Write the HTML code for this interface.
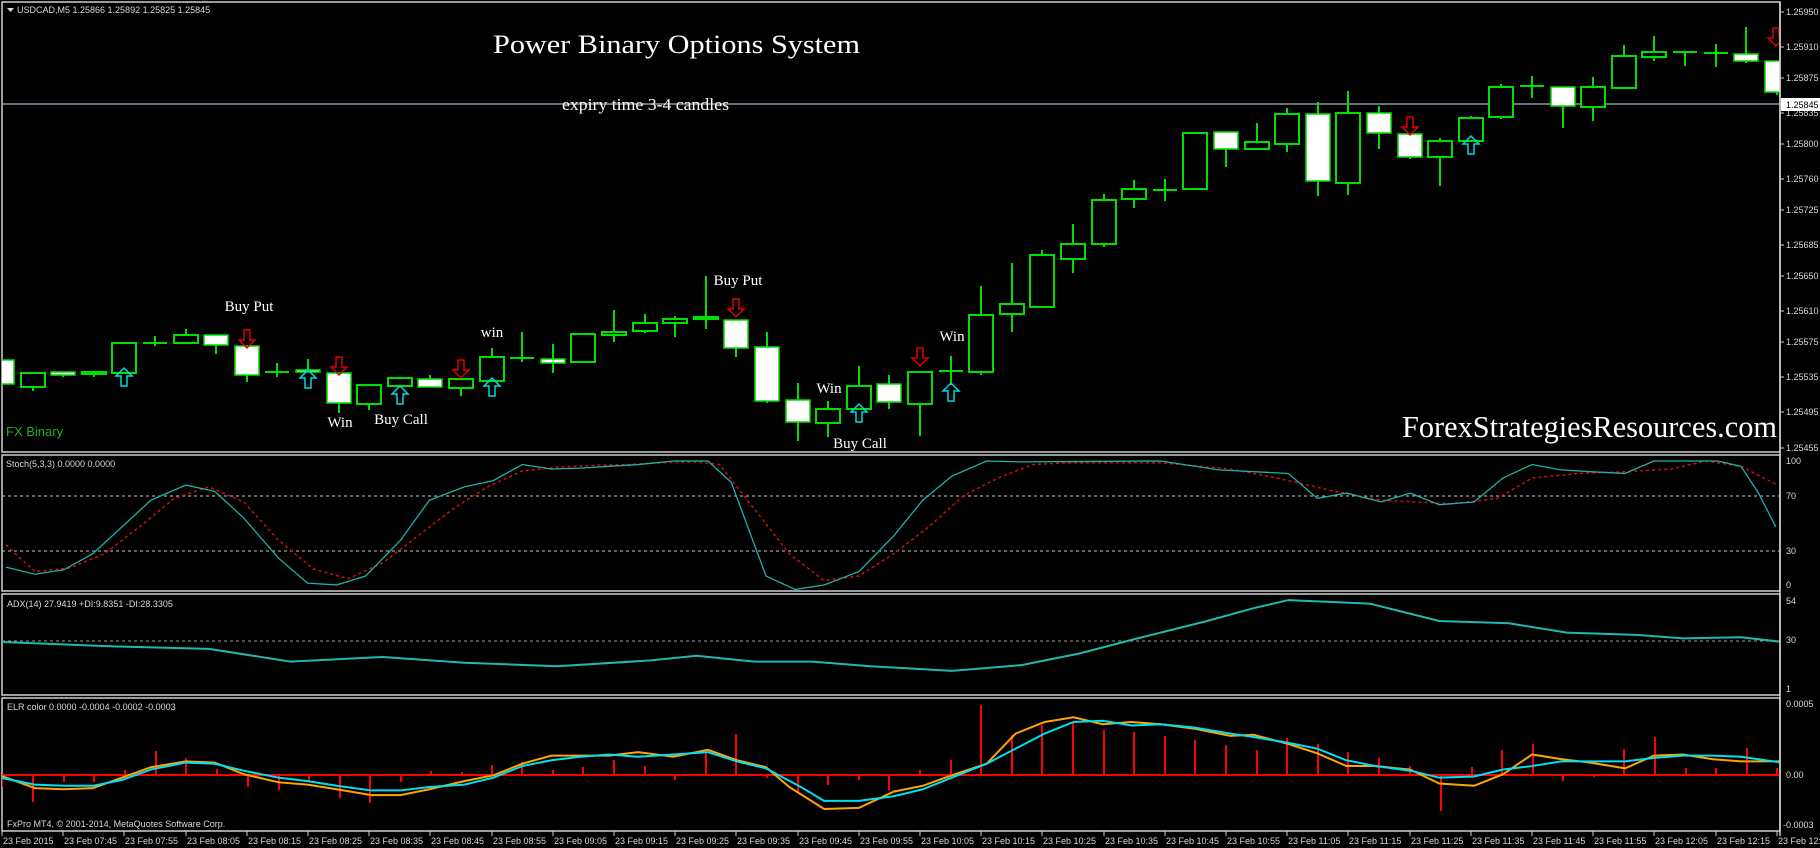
<!DOCTYPE html>
<html><head><meta charset="utf-8"><style>
html,body{margin:0;padding:0;background:#000;width:1820px;height:848px;overflow:hidden}
svg{display:block}
.ax{font-family:"Liberation Sans",sans-serif;font-size:9px;fill:#d8d8d8}
.sr{font-family:"Liberation Serif",serif;fill:#fff}
</style></head><body>
<svg width="1820" height="848" viewBox="0 0 1820 848" xmlns="http://www.w3.org/2000/svg">
<defs><clipPath id="cm"><rect x="2" y="2" width="1778" height="450"/></clipPath>
<clipPath id="cp"><rect x="2" y="455" width="1778" height="376"/></clipPath></defs>
<rect width="1820" height="848" fill="#000"/>
<g fill="none" stroke="#d0d0d0" stroke-width="1.5">
<rect x="2" y="2" width="1778" height="450"/>
<rect x="2" y="455" width="1778" height="136"/>
<rect x="2" y="594" width="1778" height="101"/>
<rect x="2" y="698" width="1778" height="133"/>
</g>
<line x1="2" y1="104" x2="1780" y2="104" stroke="#8a98a8" stroke-width="1.5"/>
<g clip-path="url(#cm)">
<g stroke="#00e000" stroke-width="2">
<line x1="2" y1="360" x2="2" y2="384"/><line x1="33" y1="373" x2="33" y2="391"/><line x1="63" y1="372" x2="63" y2="377"/><line x1="94" y1="372" x2="94" y2="377"/><line x1="124" y1="342" x2="124" y2="373"/><line x1="155" y1="336" x2="155" y2="346"/><line x1="186" y1="329" x2="186" y2="343"/><line x1="216" y1="335" x2="216" y2="354"/><line x1="247" y1="346" x2="247" y2="382"/><line x1="277" y1="363" x2="277" y2="377"/><line x1="308" y1="359" x2="308" y2="372"/><line x1="339" y1="373" x2="339" y2="413"/><line x1="369" y1="384" x2="369" y2="410"/><line x1="400" y1="378" x2="400" y2="386"/><line x1="430" y1="375" x2="430" y2="387"/><line x1="461" y1="379" x2="461" y2="396"/><line x1="492" y1="348" x2="492" y2="381"/><line x1="522" y1="332" x2="522" y2="362"/><line x1="553" y1="344" x2="553" y2="373"/><line x1="583" y1="334" x2="583" y2="362"/><line x1="614" y1="310" x2="614" y2="342"/><line x1="645" y1="314" x2="645" y2="333"/><line x1="675" y1="316" x2="675" y2="337"/><line x1="706" y1="276" x2="706" y2="329"/><line x1="736" y1="320" x2="736" y2="357"/><line x1="767" y1="332" x2="767" y2="403"/><line x1="798" y1="383" x2="798" y2="441"/><line x1="828" y1="401" x2="828" y2="437"/><line x1="859" y1="366" x2="859" y2="409"/><line x1="889" y1="375" x2="889" y2="409"/><line x1="920" y1="372" x2="920" y2="436"/><line x1="951" y1="356" x2="951" y2="385"/><line x1="981" y1="286" x2="981" y2="375"/><line x1="1012" y1="263" x2="1012" y2="332"/><line x1="1042" y1="250" x2="1042" y2="307"/><line x1="1073" y1="224" x2="1073" y2="273"/><line x1="1104" y1="194" x2="1104" y2="247"/><line x1="1134" y1="180" x2="1134" y2="208"/><line x1="1165" y1="179" x2="1165" y2="201"/><line x1="1195" y1="132" x2="1195" y2="190"/><line x1="1226" y1="132" x2="1226" y2="167"/><line x1="1257" y1="123" x2="1257" y2="150"/><line x1="1287" y1="108" x2="1287" y2="152"/><line x1="1318" y1="102" x2="1318" y2="196"/><line x1="1348" y1="91" x2="1348" y2="195"/><line x1="1379" y1="106" x2="1379" y2="149"/><line x1="1410" y1="134" x2="1410" y2="159"/><line x1="1440" y1="138" x2="1440" y2="186"/><line x1="1471" y1="116" x2="1471" y2="141"/><line x1="1501" y1="84" x2="1501" y2="119"/><line x1="1532" y1="76" x2="1532" y2="98"/><line x1="1563" y1="87" x2="1563" y2="128"/><line x1="1593" y1="77" x2="1593" y2="121"/><line x1="1624" y1="45" x2="1624" y2="88"/><line x1="1654" y1="36" x2="1654" y2="61"/><line x1="1685" y1="52" x2="1685" y2="66"/><line x1="1716" y1="44" x2="1716" y2="67"/><line x1="1746" y1="27" x2="1746" y2="63"/><line x1="1777" y1="61" x2="1777" y2="95"/>
<line x1="143" y1="343" x2="167" y2="343"/><line x1="265" y1="372" x2="289" y2="372"/><line x1="510" y1="358" x2="534" y2="358"/><line x1="939" y1="371" x2="963" y2="371"/><line x1="1153" y1="190" x2="1177" y2="190"/><line x1="1520" y1="86" x2="1544" y2="86"/><line x1="1673" y1="52" x2="1697" y2="52"/><line x1="1704" y1="53" x2="1728" y2="53"/>
</g>
<g fill="#000" stroke="#00e000" stroke-width="2">
<rect x="21" y="373" width="24" height="14"/><rect x="82" y="372" width="24" height="2"/><rect x="112" y="343" width="24" height="30"/><rect x="174" y="335" width="24" height="8"/><rect x="357" y="385" width="24" height="19"/><rect x="388" y="378" width="24" height="8"/><rect x="449" y="379" width="24" height="9"/><rect x="480" y="357" width="24" height="24"/><rect x="571" y="334" width="24" height="28"/><rect x="602" y="332" width="24" height="3"/><rect x="633" y="323" width="24" height="8"/><rect x="663" y="319" width="24" height="4"/><rect x="694" y="317" width="24" height="2"/><rect x="816" y="409" width="24" height="14"/><rect x="847" y="386" width="24" height="23"/><rect x="908" y="372" width="24" height="32"/><rect x="969" y="315" width="24" height="57"/><rect x="1000" y="304" width="24" height="10"/><rect x="1030" y="255" width="24" height="52"/><rect x="1061" y="244" width="24" height="15"/><rect x="1092" y="200" width="24" height="44"/><rect x="1122" y="189" width="24" height="10"/><rect x="1183" y="133" width="24" height="56"/><rect x="1245" y="142" width="24" height="7"/><rect x="1275" y="114" width="24" height="30"/><rect x="1336" y="113" width="24" height="70"/><rect x="1428" y="141" width="24" height="16"/><rect x="1459" y="118" width="24" height="23"/><rect x="1489" y="87" width="24" height="30"/><rect x="1581" y="87" width="24" height="20"/><rect x="1612" y="56" width="24" height="32"/><rect x="1642" y="52" width="24" height="5"/>
</g>
<g fill="#fff" stroke="#00e000" stroke-width="1.5">
<rect x="-10" y="360" width="24" height="24"/><rect x="51" y="372" width="24" height="3"/><rect x="204" y="335" width="24" height="10"/><rect x="235" y="346" width="24" height="29"/><rect x="296" y="370" width="24" height="2"/><rect x="327" y="373" width="24" height="30"/><rect x="418" y="379" width="24" height="8"/><rect x="541" y="359" width="24" height="4"/><rect x="724" y="320" width="24" height="28"/><rect x="755" y="347" width="24" height="54"/><rect x="786" y="400" width="24" height="22"/><rect x="877" y="384" width="24" height="18"/><rect x="1214" y="132" width="24" height="17"/><rect x="1306" y="114" width="24" height="67"/><rect x="1367" y="113" width="24" height="20"/><rect x="1398" y="134" width="24" height="23"/><rect x="1551" y="87" width="24" height="19"/><rect x="1734" y="54" width="24" height="7"/><rect x="1765" y="61" width="24" height="31"/>
</g>
<g fill="none" stroke="#e00000" stroke-width="1.5">
<path d="M244,330h6v10h5l-8,8l-8,-8h5z"/><path d="M336,357h6v10h5l-8,8l-8,-8h5z"/><path d="M458,360h6v10h5l-8,8l-8,-8h5z"/><path d="M733,299h6v10h5l-8,8l-8,-8h5z"/><path d="M917,348h6v10h5l-8,8l-8,-8h5z"/><path d="M1407,117h6v10h5l-8,8l-8,-8h5z"/><path d="M1773,28h6v10h5l-8,8l-8,-8h5z"/>
</g>
<g fill="none" stroke="#00d8e8" stroke-width="1.5">
<path d="M121,386h6v-10h5l-8,-8l-8,8h5z"/><path d="M305,388h6v-10h5l-8,-8l-8,8h5z"/><path d="M397,404h6v-10h5l-8,-8l-8,8h5z"/><path d="M489,396h6v-10h5l-8,-8l-8,8h5z"/><path d="M856,422h6v-10h5l-8,-8l-8,8h5z"/><path d="M948,401h6v-10h5l-8,-8l-8,8h5z"/><path d="M1468,154h6v-10h5l-8,-8l-8,8h5z"/>
</g>
</g>
<g class="sr" font-size="15" text-anchor="middle">
<text x="249" y="311">Buy Put</text><text x="340" y="427">Win</text><text x="401" y="424">Buy Call</text><text x="492" y="337">win</text>
<text x="738" y="285">Buy Put</text><text x="829" y="393">Win</text><text x="860" y="448">Buy Call</text><text x="952" y="341">Win</text>
</g>
<text class="sr" x="493" y="53" font-size="26" textLength="367" lengthAdjust="spacingAndGlyphs">Power Binary Options System</text>
<text class="sr" x="562" y="110" font-size="17" textLength="167" lengthAdjust="spacingAndGlyphs">expiry time 3-4 candles</text>
<text class="sr" x="1402" y="437" font-size="31" textLength="375" lengthAdjust="spacingAndGlyphs">ForexStrategiesResources.com</text>
<text x="6" y="436" font-family="Liberation Sans,sans-serif" font-size="13" fill="#20b020">FX Binary</text>
<path d="M7,8h7l-3.5,4z" fill="#d8d8d8"/>
<text class="ax" x="17" y="13" font-size="10">USDCAD,M5  1.25866 1.25892 1.25825 1.25845</text>
<g clip-path="url(#cp)">
<g stroke="#c8c8c8" stroke-width="1" stroke-dasharray="3,3"><line x1="2" y1="496" x2="1780" y2="496"/><line x1="2" y1="551" x2="1780" y2="551"/><line x1="2" y1="641" x2="1780" y2="641" stroke="#a0a0a0"/></g>
<g transform="translate(0,134.5) scale(1.1607,0.892)" fill="none">
<polyline vector-effect="non-scaling-stroke" stroke="#d01010" stroke-width="1.5" stroke-dasharray="3,3" points="5,460 30,490 60,486 90,470 120,440 150,408 180,395 210,412 240,455 270,487 300,498 330,480 360,450 390,420 420,395 450,377 480,373 510,371 540,370 570,368 600,367 620,370 650,420 680,470 710,500 740,495 770,470 800,440 830,405 860,385 890,370 920,368 1000,368 1060,375 1100,385 1150,400 1190,410 1220,412 1250,414 1290,408 1320,385 1360,380 1400,378 1440,375 1470,366 1500,372 1530,392"/>
<polyline vector-effect="non-scaling-stroke" stroke="#20b0a8" stroke-width="1.3" points="5,485 30,493 55,488 80,470 105,440 130,410 160,393 185,400 210,430 240,475 265,503 290,505 315,495 345,455 370,410 400,395 425,388 450,370 475,375 500,374 525,372 550,370 580,366 610,366 630,390 660,495 685,510 710,505 740,490 770,450 795,410 820,383 850,366 880,367 1000,366 1050,376 1110,380 1135,408 1160,402 1190,412 1215,402 1240,415 1270,412 1295,385 1320,370 1345,376 1370,378 1400,380 1425,366 1450,366 1480,366 1500,372 1515,402 1530,440"/>
</g>
<g transform="scale(1.1607)" fill="none">
<polyline vector-effect="non-scaling-stroke" stroke="#20b8b0" stroke-width="2" points="0,553 100,557 180,559 250,570 330,566 400,571 480,574 560,569 600,565 650,570 700,570 750,574 820,578 880,573 930,563 980,550 1040,535 1080,524 1110,517 1180,520 1240,535 1300,537 1350,545 1410,547 1450,550 1500,549 1535,553"/>
</g>
<line x1="2" y1="775" x2="1780" y2="775" stroke="#ff0000" stroke-width="2"/>
<g stroke="#ff0000" stroke-width="2">
<line x1="2" y1="775" x2="2" y2="787"/><line x1="33" y1="775" x2="33" y2="802"/><line x1="64" y1="775" x2="64" y2="782"/><line x1="94" y1="775" x2="94" y2="782"/><line x1="125" y1="775" x2="125" y2="770"/><line x1="156" y1="775" x2="156" y2="751"/><line x1="186" y1="775" x2="186" y2="758"/><line x1="217" y1="775" x2="217" y2="769"/><line x1="248" y1="775" x2="248" y2="787"/><line x1="279" y1="775" x2="279" y2="790"/><line x1="309" y1="775" x2="309" y2="782"/><line x1="340" y1="775" x2="340" y2="798"/><line x1="370" y1="775" x2="370" y2="803"/><line x1="401" y1="775" x2="401" y2="782"/><line x1="431" y1="775" x2="431" y2="771"/><line x1="462" y1="775" x2="462" y2="772"/><line x1="492" y1="775" x2="492" y2="765"/><line x1="522" y1="775" x2="522" y2="762"/><line x1="553" y1="775" x2="553" y2="770"/><line x1="583" y1="775" x2="583" y2="767"/><line x1="614" y1="775" x2="614" y2="760"/><line x1="645" y1="775" x2="645" y2="766"/><line x1="675" y1="775" x2="675" y2="780"/><line x1="706" y1="775" x2="706" y2="752"/><line x1="736" y1="775" x2="736" y2="734"/><line x1="767" y1="775" x2="767" y2="778"/><line x1="798" y1="775" x2="798" y2="792"/><line x1="828" y1="775" x2="828" y2="785"/><line x1="859" y1="775" x2="859" y2="780"/><line x1="889" y1="775" x2="889" y2="790"/><line x1="920" y1="775" x2="920" y2="770"/><line x1="951" y1="775" x2="951" y2="760"/><line x1="981" y1="775" x2="981" y2="705"/><line x1="1012" y1="775" x2="1012" y2="735"/><line x1="1042" y1="775" x2="1042" y2="725"/><line x1="1073" y1="775" x2="1073" y2="722"/><line x1="1104" y1="775" x2="1104" y2="730"/><line x1="1134" y1="775" x2="1134" y2="732"/><line x1="1165" y1="775" x2="1165" y2="736"/><line x1="1195" y1="775" x2="1195" y2="740"/><line x1="1226" y1="775" x2="1226" y2="745"/><line x1="1257" y1="775" x2="1257" y2="750"/><line x1="1287" y1="775" x2="1287" y2="738"/><line x1="1318" y1="775" x2="1318" y2="744"/><line x1="1348" y1="775" x2="1348" y2="752"/><line x1="1379" y1="775" x2="1379" y2="758"/><line x1="1410" y1="775" x2="1410" y2="766"/><line x1="1441" y1="775" x2="1441" y2="811"/><line x1="1472" y1="775" x2="1472" y2="767"/><line x1="1502" y1="775" x2="1502" y2="750"/><line x1="1533" y1="775" x2="1533" y2="744"/><line x1="1563" y1="775" x2="1563" y2="781"/><line x1="1594" y1="775" x2="1594" y2="777"/><line x1="1624" y1="775" x2="1624" y2="749"/><line x1="1655" y1="775" x2="1655" y2="737"/><line x1="1686" y1="775" x2="1686" y2="768"/><line x1="1716" y1="775" x2="1716" y2="768"/><line x1="1747" y1="775" x2="1747" y2="748"/><line x1="1777" y1="775" x2="1777" y2="768"/>
</g>
<g transform="scale(1.1607)" fill="none" stroke-width="2">
<polyline vector-effect="non-scaling-stroke" stroke="#ffa500" points="0,668 30,679 55,680 80,679 105,670 130,661 160,656 185,657 210,667 240,674 265,676 290,680 320,685 345,685 370,680 400,673 425,668 450,658 475,651 500,651 525,651 550,648 580,652 610,646 635,655 660,661 680,678 710,697 740,696 770,682 795,677 820,668 850,658 875,632 900,622 925,618 950,624 975,622 1000,624 1030,628 1060,634 1080,633 1110,641 1135,649 1160,660 1185,660 1215,663 1240,675 1270,677 1295,667 1320,650 1345,654 1370,657 1400,662 1425,651 1450,650 1475,654 1500,656 1535,656"/>
<polyline vector-effect="non-scaling-stroke" stroke="#00e0f0" points="0,670 30,676 55,677 80,677 105,672 130,663 160,657 185,658 210,664 240,670 265,673 290,677 320,681 345,681 370,678 400,676 425,670 450,660 475,655 500,652 525,650 550,652 580,650 610,648 635,656 660,662 690,678 710,690 740,690 770,686 795,680 820,670 850,658 875,645 900,632 925,622 950,621 975,625 1000,624 1030,627 1060,632 1080,635 1110,640 1135,645 1160,655 1185,660 1215,664 1240,670 1270,669 1295,663 1320,660 1345,656 1370,656 1400,656 1425,653 1450,651 1475,651 1500,652 1535,657"/>
</g>
</g>
<g class="ax" font-size="10">
<text x="6" y="467">Stoch(5,3,3) 0.0000 0.0000</text>
<text x="7" y="607">ADX(14) 27.9419 +DI:9.8351 -DI:28.3305</text>
<text x="7" y="710">ELR color 0.0000 -0.0004 -0.0002 -0.0003</text>
<text x="7" y="827">FxPro MT4, © 2001-2014, MetaQuotes Software Corp.</text>
</g>
<line x1="1780" y1="2" x2="1780" y2="836" stroke="#d0d0d0" stroke-width="1.5"/>
<g class="ax">
<text x="1786" y="15">1.25950</text><text x="1786" y="50">1.25910</text><text x="1786" y="81">1.25875</text><text x="1786" y="116">1.25835</text><text x="1786" y="147">1.25800</text><text x="1786" y="182">1.25760</text><text x="1786" y="213">1.25725</text><text x="1786" y="248">1.25685</text><text x="1786" y="279">1.25650</text><text x="1786" y="314">1.25610</text><text x="1786" y="345">1.25575</text><text x="1786" y="380">1.25535</text><text x="1786" y="415">1.25495</text><text x="1786" y="451">1.25455</text>
<text x="1786" y="464">100</text><text x="1786" y="499">70</text><text x="1786" y="554">30</text><text x="1786" y="588">0</text>
<text x="1786" y="604">54</text><text x="1786" y="643">30</text><text x="1786" y="692">1</text>
<text x="1786" y="707">0.0005</text><text x="1786" y="778">0.00</text><text x="1783" y="828">-0.0003</text>
</g>
<rect x="1781" y="98" width="39" height="13" fill="#fff"/>
<text x="1786" y="108" font-family="Liberation Sans,sans-serif" font-size="9" fill="#000">1.25845</text>
<g stroke="#d0d0d0" stroke-width="1">
<line x1="1780" y1="12" x2="1784" y2="12"/><line x1="1780" y1="47" x2="1784" y2="47"/><line x1="1780" y1="78" x2="1784" y2="78"/><line x1="1780" y1="113" x2="1784" y2="113"/><line x1="1780" y1="144" x2="1784" y2="144"/><line x1="1780" y1="179" x2="1784" y2="179"/><line x1="1780" y1="210" x2="1784" y2="210"/><line x1="1780" y1="245" x2="1784" y2="245"/><line x1="1780" y1="276" x2="1784" y2="276"/><line x1="1780" y1="311" x2="1784" y2="311"/><line x1="1780" y1="342" x2="1784" y2="342"/><line x1="1780" y1="377" x2="1784" y2="377"/><line x1="1780" y1="412" x2="1784" y2="412"/><line x1="1780" y1="448" x2="1784" y2="448"/>
</g>
<g stroke="#d0d0d0" stroke-width="1">
<line x1="2" y1="831" x2="2" y2="836"/><line x1="63" y1="831" x2="63" y2="836"/><line x1="124" y1="831" x2="124" y2="836"/><line x1="186" y1="831" x2="186" y2="836"/><line x1="247" y1="831" x2="247" y2="836"/><line x1="308" y1="831" x2="308" y2="836"/><line x1="369" y1="831" x2="369" y2="836"/><line x1="430" y1="831" x2="430" y2="836"/><line x1="492" y1="831" x2="492" y2="836"/><line x1="553" y1="831" x2="553" y2="836"/><line x1="614" y1="831" x2="614" y2="836"/><line x1="675" y1="831" x2="675" y2="836"/><line x1="736" y1="831" x2="736" y2="836"/><line x1="798" y1="831" x2="798" y2="836"/><line x1="859" y1="831" x2="859" y2="836"/><line x1="920" y1="831" x2="920" y2="836"/><line x1="981" y1="831" x2="981" y2="836"/><line x1="1042" y1="831" x2="1042" y2="836"/><line x1="1104" y1="831" x2="1104" y2="836"/><line x1="1165" y1="831" x2="1165" y2="836"/><line x1="1226" y1="831" x2="1226" y2="836"/><line x1="1287" y1="831" x2="1287" y2="836"/><line x1="1348" y1="831" x2="1348" y2="836"/><line x1="1410" y1="831" x2="1410" y2="836"/><line x1="1471" y1="831" x2="1471" y2="836"/><line x1="1532" y1="831" x2="1532" y2="836"/><line x1="1593" y1="831" x2="1593" y2="836"/><line x1="1654" y1="831" x2="1654" y2="836"/><line x1="1716" y1="831" x2="1716" y2="836"/><line x1="1777" y1="831" x2="1777" y2="836"/>
</g>
<g class="ax">
<text x="3" y="844">23 Feb 2015</text><text x="64" y="844">23 Feb 07:45</text><text x="125" y="844">23 Feb 07:55</text><text x="187" y="844">23 Feb 08:05</text><text x="248" y="844">23 Feb 08:15</text><text x="309" y="844">23 Feb 08:25</text><text x="370" y="844">23 Feb 08:35</text><text x="431" y="844">23 Feb 08:45</text><text x="493" y="844">23 Feb 08:55</text><text x="554" y="844">23 Feb 09:05</text><text x="615" y="844">23 Feb 09:15</text><text x="676" y="844">23 Feb 09:25</text><text x="737" y="844">23 Feb 09:35</text><text x="799" y="844">23 Feb 09:45</text><text x="860" y="844">23 Feb 09:55</text><text x="921" y="844">23 Feb 10:05</text><text x="982" y="844">23 Feb 10:15</text><text x="1043" y="844">23 Feb 10:25</text><text x="1105" y="844">23 Feb 10:35</text><text x="1166" y="844">23 Feb 10:45</text><text x="1227" y="844">23 Feb 10:55</text><text x="1288" y="844">23 Feb 11:05</text><text x="1349" y="844">23 Feb 11:15</text><text x="1411" y="844">23 Feb 11:25</text><text x="1472" y="844">23 Feb 11:35</text><text x="1533" y="844">23 Feb 11:45</text><text x="1594" y="844">23 Feb 11:55</text><text x="1655" y="844">23 Feb 12:05</text><text x="1717" y="844">23 Feb 12:15</text><text x="1778" y="844">23 Feb 12:25</text>
</g>
</svg>
</body></html>
